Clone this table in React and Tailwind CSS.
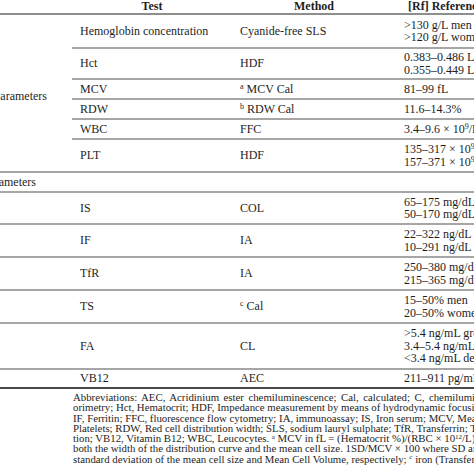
import React from "react";

const Line = ({ className = "bg-[#a6a6a6]" }) => <div className={`h-[2px] ${className}`} />;

const Cal = ({ mark, label }) => (
  <span>
    <sup className="text-[8px]">{mark}</sup> {label}
  </span>
);

const Pow = ({ base, exp, size = "text-[8px]" }) => (
  <span>
    {base}
    <sup className={size}>{exp}</sup>
  </span>
);

const hematology = [
  { test: "Hemoglobin concentration", method: "Cyanide-free SLS", ref: [">130 g/L men", ">120 g/L women"], h: "h-[32px]" },
  { test: "Hct", method: "HDF", ref: ["0.383–0.486 L/L men", "0.355–0.449 L/L women"], h: "h-[29px]" },
  { test: "MCV", method: <Cal mark="a" label="MCV Cal" />, ref: ["81–99 fL"], h: "h-[18px]" },
  { test: "RDW", method: <Cal mark="b" label="RDW Cal" />, ref: ["11.6–14.3%"], h: "h-[18px]" },
  { test: "WBC", method: "FFC", ref: [<span key="w">3.4–9.6 × <Pow base="10" exp="9" />/L</span>], h: "h-[18px]" },
  {
    test: "PLT",
    method: "HDF",
    ref: [
      <span key="m">135–317 × <Pow base="10" exp="9" />/L men</span>,
      <span key="f">157–371 × <Pow base="10" exp="9" />/L women</span>,
    ],
    h: "h-[31px]",
  },
];

const biochemistry = [
  { test: "IS", method: "COL", ref: ["65–175 mg/dL men", "50–170 mg/dL women"], h: "h-[30px]" },
  { test: "IF", method: "IA", ref: ["22–322 ng/dL men", "10–291 ng/dL women"], h: "h-[31px]" },
  { test: "TfR", method: "IA", ref: ["250–380 mg/dL men", "215–365 mg/dL women"], h: "h-[31px]" },
  { test: "TS", method: <Cal mark="c" label="Cal" />, ref: ["15–50% men", "20–50% women"], h: "h-[31px]" },
  {
    test: "FA",
    method: "CL",
    ref: [">5.4 ng/mL greater", "3.4–5.4 ng/mL, borderline", "<3.4 ng/mL deficient"],
    h: "h-[44px]",
  },
  { test: "VB12", method: "AEC", ref: ["211–911 pg/mL"], h: "h-[17px]" },
];

const Cells = ({ row }) => (
  <>
    <div className="pl-[8px] whitespace-nowrap">{row.test}</div>
    <div className="pl-[8px] whitespace-nowrap">{row.method}</div>
    <div className="pl-[8px] whitespace-nowrap">
      {row.ref.map((item, i) => (
        <div key={i}>{item}</div>
      ))}
    </div>
  </>
);

const footnote = [
  {
    text: "Abbreviations:  AEC, Acridinium ester chemiluminescence; Cal, calculated; C, chemiluminescence; COL, col-",
    spacing: "[word-spacing:1.8px]",
  },
  { text: "orimetry; Hct, Hematocrit; HDF, Impedance measurement by means of hydrodynamic focusing; IS, Iron", spacing: "" },
  {
    text: "IF, Ferritin; FFC, fluorescence flow cytometry; IA, immunoassay; IS, Iron serum; MCV, Mean cell volume; PLT,",
    spacing: "",
  },
  {
    text: "Platelets; RDW, Red cell distribution width; SLS, sodium lauryl sulphate; TfR, Transferrin; TS, Transferrin satura-",
    spacing: "",
  },
  {
    text: (
      <span>
        tion; VB12, Vitamin B12; WBC, Leucocytes. <sup className="text-[7px]">a</sup> MCV in fL = (Hematocrit %)/(RBC ×{" "}
        <Pow base="10" exp="12" size="text-[7px]" />
        /L); <sup className="text-[7px]">b</sup> RDW reflects
      </span>
    ),
    spacing: "",
  },
  {
    text: "both the width of the distribution curve and the mean cell size. 1SD/MCV × 100 where SD and MCV are the",
    spacing: "",
  },
  {
    text: (
      <span>
        standard deviation of the mean cell size and Mean Cell Volume, respectively; <sup className="text-[7px]">c</sup>{" "}
        iron (Transferrin × 1.41).
      </span>
    ),
    spacing: "",
  },
];

export default function App() {
  return (
    <div className="h-[474px] w-[474px] overflow-hidden bg-white font-['Liberation_Serif',serif] text-[12px] leading-[12.5px] text-[#1e1e1e]">
      <div className="w-[680px]">
        <div className="grid h-[13px] grid-cols-[72px_160px_164px_284px] items-end pb-[3px] font-bold">
          <div />
          <div className="text-center">Test</div>
          <div className="text-center">Method</div>
          <div className="pl-[12px] whitespace-nowrap">[Rf] Reference Values</div>
        </div>
        <Line className="bg-[#8e8e8e]" />

        <div className="flex">
          <div className="flex w-[72px] shrink-0 items-center justify-end pt-[6px] pr-[25px] whitespace-nowrap">
            Hematological Parameters
          </div>
          <div className="flex-1">
            {hematology.map((row, i) => (
              <div key={row.test}>
                {i > 0 && <Line />}
                <div className={`grid grid-cols-[160px_164px_1fr] items-center ${row.h}`}>
                  <Cells row={row} />
                </div>
              </div>
            ))}
          </div>
        </div>
        <Line />

        <div className="flex h-[18px] items-center">
          <div className="flex w-[72px] shrink-0 justify-end pr-[36px] whitespace-nowrap">Biochemical Parameters</div>
        </div>

        {biochemistry.map((row) => (
          <div key={row.test}>
            <Line />
            <div className={`grid grid-cols-[72px_160px_164px_1fr] items-center ${row.h}`}>
              <div />
              <Cells row={row} />
            </div>
          </div>
        ))}
        <Line className="bg-[#4a4a4a]" />

        <div className="pt-[3px] pl-[73px] text-[10.8px] leading-[10.3px]">
          {footnote.map((line, i) => (
            <div key={i} className={`whitespace-nowrap ${line.spacing}`}>
              {line.text}
            </div>
          ))}
        </div>
      </div>
    </div>
  );
}
